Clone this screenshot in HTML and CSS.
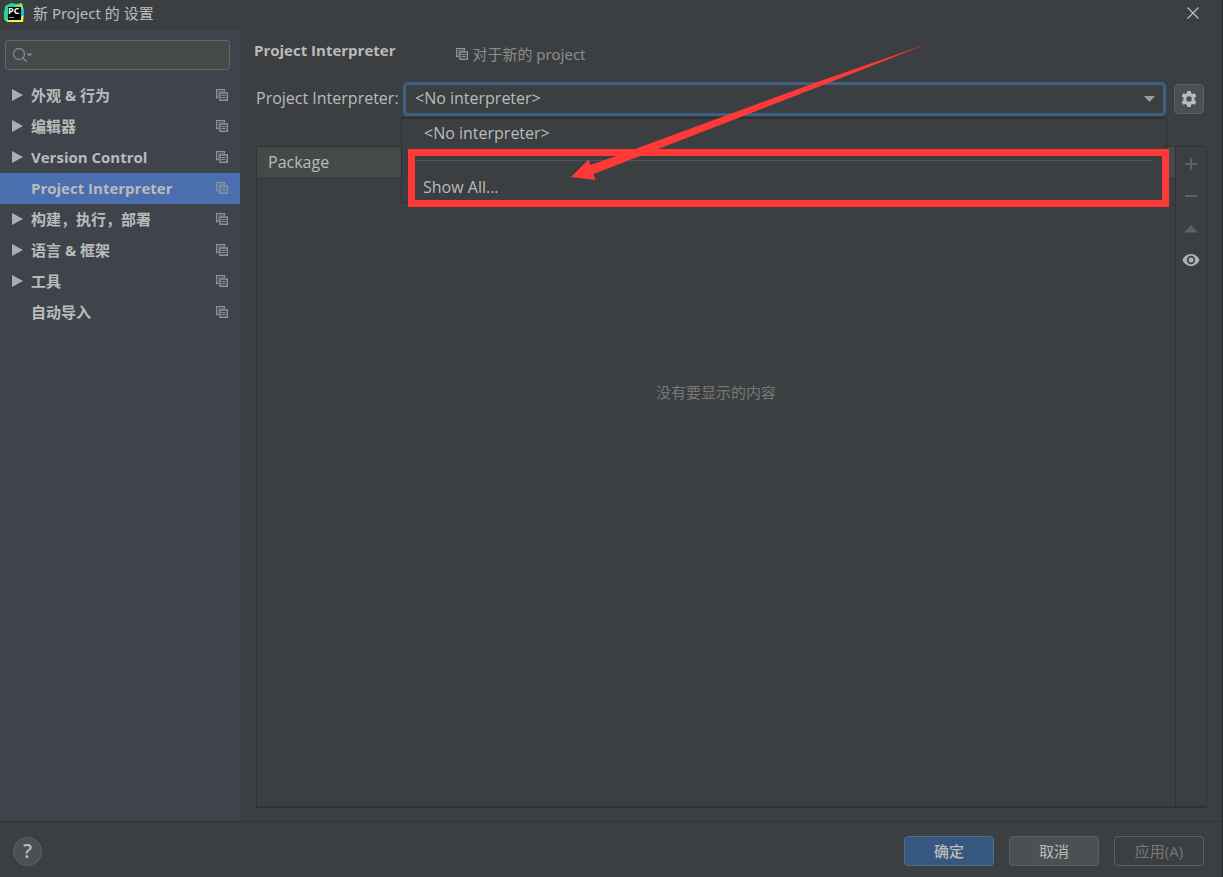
FILE: index.html
```html
<!DOCTYPE html>
<html lang="zh-CN">
<head>
    <meta charset="UTF-8">
    <meta name="viewport" content="width=device-width, initial-scale=1.0">
    <title>新 Project 的 设置</title>
    <link rel="stylesheet" href="styles.css">
</head>
<body>
    <!-- Shared icons -->
    <svg class="sprite" aria-hidden="true">
        <symbol id="copy" viewBox="0 0 12 12">
            <path d="M2.500 8.500H.5V.5h8v2" fill="none" stroke="currentColor" stroke-width="1.300"/>
            <path d="M2.500 9V2.500H9" fill="none" stroke="currentColor" opacity="0.500"/>
            <path d="M4 4h7.300v7.300H4z" fill="none" stroke="currentColor" stroke-width="1.400"/>
            <path d="M5.500 6.500h4M5.500 8.500h4" stroke="currentColor"/>
        </symbol>
        <symbol id="arrow" viewBox="0 0 12 12">
            <path d="M0 0l11 6-11 6z" fill="currentColor"/>
        </symbol>
    </svg>

    <header class="titlebar">
        <svg class="logo" width="20" height="20" viewBox="0 0 20 20" aria-hidden="true">
            <defs>
                <linearGradient id="logoFill" x1="0" y1="0" x2="1" y2="1">
                    <stop offset="0.300" stop-color="#21d789"/>
                    <stop offset="0.700" stop-color="#fcf84a"/>
                </linearGradient>
            </defs>
            <path d="M1 3l6-3 6 1 5-1 1 5 1 4-1 10H3L0 16z" fill="url(#logoFill)"/>
            <path d="M17 5l3 3v4l-3 2z" fill="#07c3f2"/>
            <path d="M0 15V8l4-4v13z" fill="#21d789"/>
            <path d="M4 4h13v13H4z" fill="#000"/>
            <text x="4" y="11" class="logo-text">PC</text>
            <path d="M5 14.500h5" stroke="#aaa"/>
        </svg>
        <h1>新 Project 的 设置</h1>
        <button class="close" aria-label="关闭">
            <svg width="12" height="12" viewBox="0 0 12 12"><path d="M.5.5l11 11M11.500.5l-11 11" stroke="currentColor" stroke-width="1.300"/></svg>
        </button>
    </header>

    <div class="body">
        <aside class="sidebar">
            <div class="search">
                <svg width="22" height="16" viewBox="0 0 22 16" aria-hidden="true">
                    <circle cx="7" cy="7" r="5.500" fill="none" stroke="currentColor" stroke-width="1.300"/>
                    <path d="M11 11l4 4" stroke="currentColor" stroke-width="1.500"/>
                    <path d="M14.500 6.500h6L17.500 9.500z" fill="currentColor"/>
                </svg>
                <input type="text" aria-label="搜索">
            </div>
            <nav class="tree">
                <a href="#"><svg class="arrow"><use href="#arrow"/></svg><span>外观 &amp; 行为</span><svg class="copy"><use href="#copy"/></svg></a>
                <a href="#"><svg class="arrow"><use href="#arrow"/></svg><span>编辑器</span><svg class="copy"><use href="#copy"/></svg></a>
                <a href="#"><svg class="arrow"><use href="#arrow"/></svg><span>Version Control</span><svg class="copy"><use href="#copy"/></svg></a>
                <a href="#" class="leaf selected"><span>Project Interpreter</span><svg class="copy"><use href="#copy"/></svg></a>
                <a href="#"><svg class="arrow"><use href="#arrow"/></svg><span>构建，执行，部署</span><svg class="copy"><use href="#copy"/></svg></a>
                <a href="#"><svg class="arrow"><use href="#arrow"/></svg><span>语言 &amp; 框架</span><svg class="copy"><use href="#copy"/></svg></a>
                <a href="#"><svg class="arrow"><use href="#arrow"/></svg><span>工具</span><svg class="copy"><use href="#copy"/></svg></a>
                <a href="#" class="leaf"><span>自动导入</span><svg class="copy"><use href="#copy"/></svg></a>
            </nav>
        </aside>

        <main class="content">
            <div class="heading">
                <h2>Project Interpreter</h2>
                <p><svg class="copy"><use href="#copy"/></svg>对于新的 project</p>
            </div>

            <div class="interpreter">
                <label for="interpreter">Project Interpreter:</label>
                <div class="combo">
                    <select id="interpreter">
                        <option>&lt;No interpreter&gt;</option>
                    </select>
                    <svg class="combo-arrow" width="11" height="6" viewBox="0 0 11 6" aria-hidden="true"><path d="M0 0h11L5.500 6z" fill="currentColor"/></svg>
                    <div class="popup">
                        <button>&lt;No interpreter&gt;</button>
                        <hr>
                        <button class="show-all">Show All...</button>
                    </div>
                    <!-- Red callout over the popup -->
                    <div class="callout"></div>
                    <svg class="pointer" width="358" height="138" viewBox="570 43 358 138" aria-hidden="true">
                        <path d="M571 177l17.500-17.500 2 5.500L616 156 813 83.500 927 44 827 83.500 640 156l-46.500 18 2 6z" fill="#ff3838"/>
                    </svg>
                </div>
                <button class="gear" aria-label="设置">
                    <svg width="16" height="16" viewBox="0 0 16 16">
                        <path fill="currentColor" fill-rule="evenodd" d="M6.300 0h3.400l.4 2.300 1.400.8 2.200-.9 1.700 3-1.800 1.400v2.800l1.800 1.400-1.700 3-2.200-.9-1.400.8-.4 2.300H6.300l-.4-2.300-1.400-.8-2.200.9-1.700-3 1.800-1.400V6.600L.6 5.200l1.700-3 2.200.9 1.400-.8zM8 5.200a2.800 2.800 0 1 0 0 5.600 2.800 2.800 0 0 0 0-5.600z"/>
                    </svg>
                </button>
            </div>

            <div class="packages">
                <div class="list">
                    <table>
                        <thead><tr><th>Package</th></tr></thead>
                    </table>
                    <p class="empty">没有要显示的内容</p>
                </div>
                <div class="tools">
                    <button aria-label="添加" disabled><svg width="14" height="14" viewBox="0 0 14 14"><path d="M7 1v12M1 7h12" stroke="currentColor" stroke-width="2"/></svg></button>
                    <button aria-label="移除" disabled><svg width="14" height="14" viewBox="0 0 14 14"><path d="M1 7h12" stroke="currentColor" stroke-width="2"/></svg></button>
                    <button aria-label="升级" disabled><svg width="14" height="14" viewBox="0 0 14 14"><path d="M0 11.500l7-7.500 7 7.500z" fill="currentColor"/></svg></button>
                    <button aria-label="显示"><svg width="18" height="14" viewBox="0 0 18 14"><path fill="currentColor" fill-rule="evenodd" d="M9 1c4 0 7 2.500 8.500 6C16 10.500 13 13 9 13S2 10.500.5 7C2 3.500 5 1 9 1zm0 1.800a4.200 4.200 0 1 0 0 8.400 4.200 4.200 0 0 0 0-8.400z"/><circle cx="9" cy="7" r="2.500" fill="currentColor"/></svg></button>
                </div>
            </div>
        </main>
    </div>

    <footer class="footer">
        <button class="help">?</button>
        <button class="btn primary">确定</button>
        <button class="btn">取消</button>
        <button class="btn" disabled>应用(A)</button>
    </footer>
</body>
</html>
```
FILE: styles.css
```css
* {
    box-sizing: border-box;
}

body {
    margin: 0;
    height: 100vh;
    display: flex;
    flex-direction: column;
    background: #3c3f41;
    border-right: 1px solid #242627;
    color: #bbbbbb;
    font-family: 'Open Sans', 'Noto Sans CJK SC', sans-serif;
    font-size: 15px;
    line-height: 20px;
}

h1, h2, p {
    margin: 0;
    font-size: 15px;
}

button, input, select {
    font: inherit;
    color: inherit;
    padding: 0;
    border: none;
    background: none;
}

svg {
    display: block;
    flex: none;
}

.sprite {
    position: absolute;
    width: 0;
    height: 0;
}

.copy {
    width: 12px;
    height: 12px;
    color: #8a969e;
}

/* Title Bar */
.titlebar {
    display: flex;
    align-items: center;
    height: 30px;
    padding: 0 23px 4px 4px;
}

.titlebar h1 {
    flex: 1;
    margin-left: 9px;
    font-family: 'Noto Sans', 'Noto Sans CJK SC', sans-serif;
    font-weight: normal;
}

.logo-text {
    font: bold 9px 'Open Sans', sans-serif;
    fill: #fff;
}

.body {
    flex: 1;
    display: flex;
    min-height: 0;
}

/* Sidebar */
.sidebar {
    width: 240px;
    flex: none;
    padding-top: 10px;
    background: #3f434c;
}

.search {
    display: flex;
    align-items: center;
    height: 30px;
    margin: 0 10px 10px 5px;
    padding-left: 6px;
    background: #45494a;
    border: 1px solid #646769;
    border-radius: 3px;
    color: #7f8b91;
}

.search input {
    flex: 1;
    min-width: 0;
    outline: none;
}

.tree a {
    display: flex;
    align-items: center;
    height: 31px;
    padding: 0 12px 2px;
    color: inherit;
    font-weight: bold;
    text-decoration: none;
}

.tree span {
    flex: 1;
}

.tree .arrow {
    width: 12px;
    height: 12px;
    margin-right: 7px;
    color: #adadad;
}

.tree .leaf {
    padding-left: 31px;
}

.tree .selected {
    background: #4b6eaf;
}

/* Content */
.content {
    flex: 1;
    min-width: 0;
    display: flex;
    flex-direction: column;
    padding: 10px 15px 13px 16px;
}

.heading {
    display: flex;
    gap: 61px;
}

.heading h2 {
    margin-left: -2px;
}

.heading p {
    display: flex;
    align-items: center;
    gap: 4px;
    padding-top: 4px;
    color: #8c8c8c;
    font-family: 'Noto Sans', 'Noto Sans CJK SC', sans-serif;
}

.interpreter {
    display: flex;
    align-items: center;
    height: 34px;
    margin: 18px 3px 30px 0;
    font-size: 16px;
}

.interpreter label {
    width: 147px;
    flex: none;
    padding-bottom: 2px;
    white-space: nowrap;
}

.combo {
    position: relative;
    flex: 1;
    margin-right: 8px;
}

.combo select {
    display: block;
    width: 100%;
    height: 34px;
    padding: 0 9px 2px;
    appearance: none;
    background: #3c3f41;
    border: 3px solid #3d6185;
    border-radius: 5px;
    outline: none;
}

.combo-arrow {
    position: absolute;
    top: 14px;
    right: 11px;
    color: #9a9da0;
}

.popup {
    position: absolute;
    top: 35px;
    left: -2px;
    right: -1px;
    background: #3c3f41;
    border: 1px solid #2f3133;
    border-top-width: 2px;
}

.popup button {
    display: block;
    width: 100%;
    height: 30px;
    padding: 0 22px 2px;
    text-align: left;
}

.popup hr {
    height: 1px;
    margin: 11px 14px;
    border: none;
    background: #515456;
}

.popup .show-all {
    padding: 0 21px;
}

.callout {
    position: absolute;
    top: 67px;
    left: 5px;
    right: -3px;
    height: 58px;
    border: 7px solid #ff3838;
    pointer-events: none;
}

.pointer {
    position: absolute;
    top: -39px;
    left: 167px;
    pointer-events: none;
}

.gear {
    display: grid;
    place-items: center;
    width: 30px;
    height: 30px;
    background: #4c5052;
    border: 1px solid #5e6060;
    border-radius: 4px;
}

/* Package Table */
.packages {
    flex: 1;
    display: flex;
    border: 1px solid #323232;
    border-bottom-width: 2px;
}

.list {
    flex: 1;
    display: flex;
    flex-direction: column;
}

.list table {
    width: 100%;
    border-collapse: collapse;
}

.list th {
    height: 31px;
    padding: 0 11px;
    background: #45494a;
    border-bottom: 1px solid #323232;
    font-size: 16px;
    font-weight: normal;
    text-align: left;
}

.empty {
    margin-top: 203px;
    text-align: center;
    color: #777777;
}

.tools {
    width: 31px;
    padding-top: 1px;
    border-left: 1px solid #323232;
}

.tools button {
    display: grid;
    place-items: center;
    width: 30px;
    height: 32px;
    color: #afb1b3;
}

.tools button:disabled {
    color: #5e6162;
}

/* Footer */
.footer {
    display: flex;
    align-items: center;
    gap: 15px;
    height: 56px;
    padding: 3px 18px 0 13px;
    border-top: 1px solid #313335;
}

.help {
    width: 29px;
    height: 29px;
    margin-right: auto;
    background: #4c5052;
    border: 1px solid #5e6060;
    border-radius: 50%;
    font-size: 20px;
    font-weight: 600;
}

.btn {
    width: 90px;
    height: 30px;
    background: #4c5052;
    border: 1px solid #5e6060;
    border-radius: 4px;
}

.primary {
    background: #365880;
    border-color: #4c708c;
    font-weight: 500;
}

.btn:disabled {
    background: none;
    color: #777777;
}
```
